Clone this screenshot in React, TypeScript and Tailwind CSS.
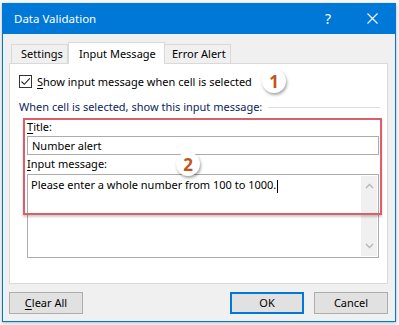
import React from "react";

const font = { fontFamily: '"Noto Sans", "Segoe UI", Arial, sans-serif' };

function Badge({ n, className }: { n: string; className: string }) {
  return (
    <div
      className={`absolute w-[24px] h-[24px] rounded-full bg-white flex items-center justify-center text-[17px] font-bold text-[#c3541c] shadow-[1px_2px_3px_rgba(0,0,0,0.35)] leading-none ${className}`}
    >
      {n}
    </div>
  );
}

export default function App() {
  return (
    <div className="w-[399px] h-[325px] bg-[#f7f7f7] pt-[3px] pl-[2px] text-[11px] leading-[14px] text-black" style={font}>
      <div className="w-[394px] h-[319px] bg-[#f0f0f0] border-x border-b border-[#0078d7] flex flex-col shadow-[0_1px_3px_rgba(0,0,0,0.25)]">
        {/* Title bar */}
        <div className="h-[31px] bg-[#0078d7] flex items-center text-white shrink-0 -mx-px">
          <span className="ml-[12px] text-[11.5px]">Data Validation</span>
          <span className="ml-auto mr-[36px] text-[14px]">?</span>
          <svg width="11" height="11" viewBox="0 0 11 11" className="mr-[18px]">
            <path d="M0.5 0.5 L10.5 10.5 M10.5 0.5 L0.5 10.5" stroke="white" strokeWidth="1.1" />
          </svg>
        </div>

        {/* Tabs */}
        <div className="flex items-end pl-[7px] pr-[7px] pt-[7px] h-[29px] shrink-0">
          <div className="h-[19px] w-[57px] border border-b-0 border-[#d9d9d9] flex items-center pl-[9px] ml-[1px]">Settings</div>
          <div className="h-[22px] w-[97px] bg-white border border-b-0 border-[#d9d9d9] flex items-center pl-[10px] relative z-10 -mb-px">Input Message</div>
          <div className="h-[19px] w-[66px] border border-b-0 border-l-0 border-[#d9d9d9] flex items-center pl-[7px]">Error Alert</div>
        </div>

        {/* Panel */}
        <div className="relative mx-[6px] mr-[7px] h-[221px] bg-white border border-[#d9d9d9] pt-[11px] px-[9px]">
          <div className="flex items-center h-[13px]">
            <div className="w-[13px] h-[13px] border border-[#333] flex items-center justify-center">
              <svg width="11" height="11" viewBox="0 0 11 11">
                <path d="M1.5 5.5 L4.3 8.3 L9.8 2.3" stroke="#222" strokeWidth="1.1" fill="none" />
              </svg>
            </div>
            <span className="ml-[5px]">
              <span className="underline underline-offset-2">S</span>how input message when cell is selected
            </span>
          </div>
          <div className="flex items-center mt-[12px] h-[14px]">
            <span className="text-[#0a1e5a]">When cell is selected, show this input message:</span>
            <div className="flex-1 h-px bg-[#dcdcdc] ml-[6px] mr-[-2px]" />
          </div>
          <div className="pl-[8px] mt-[6px]">
            <div className="h-[14px]">
              <span className="underline underline-offset-2">T</span>itle:
            </div>
            <div className="mt-[2px] h-[19px] border border-[#acacac] flex items-center pl-[4px] mr-[-1px]">Number alert</div>
            <div className="mt-[2px] h-[14px]">
              <span className="underline underline-offset-2">I</span>nput message:
            </div>
            <div className="mt-[3px] h-[84px] border border-[#acacac] flex mr-[-1px]">
              <div className="flex-1 pl-[3px] pt-[3px]">
                Please enter a whole number from 100 to 1000.<span className="inline-block w-px h-[13px] bg-black align-middle ml-px" />
              </div>
              <div className="w-[16px] bg-[#f0f0f0] flex flex-col items-center justify-between py-[7px] mr-[1px] my-px">
                <svg width="9" height="6" viewBox="0 0 9 6">
                  <path d="M1 5 L4.5 1.5 L8 5" stroke="#b5b5b5" strokeWidth="1.3" fill="none" />
                </svg>
                <svg width="9" height="6" viewBox="0 0 9 6">
                  <path d="M1 1 L4.5 4.5 L8 1" stroke="#b5b5b5" strokeWidth="1.3" fill="none" />
                </svg>
              </div>
            </div>
          </div>

          {/* annotations */}
          <div className="absolute left-[13px] top-[54px] w-[359px] h-[97px] border-2 border-[#dc5e6a] shadow-[0_2px_2px_rgba(0,0,0,0.2)]" />
          <Badge n="1" className="left-[252px] top-[5px]" />
          <Badge n="2" className="left-[166px] top-[88px]" />
        </div>

        {/* Buttons */}
        <div className="flex mt-[8px] px-[6px] pr-[7px]">
          <button className="w-[74px] h-[22px] bg-[#e1e1e1] border border-[#adadad]">
            <span className="underline underline-offset-2">C</span>lear All
          </button>
          <button className="ml-auto w-[74px] h-[22px] bg-[#e1e1e1] border-2 border-[#0078d7]">OK</button>
          <button className="ml-[10px] w-[74px] h-[22px] bg-[#e1e1e1] border border-[#adadad]">Cancel</button>
        </div>
      </div>
    </div>
  );
}
